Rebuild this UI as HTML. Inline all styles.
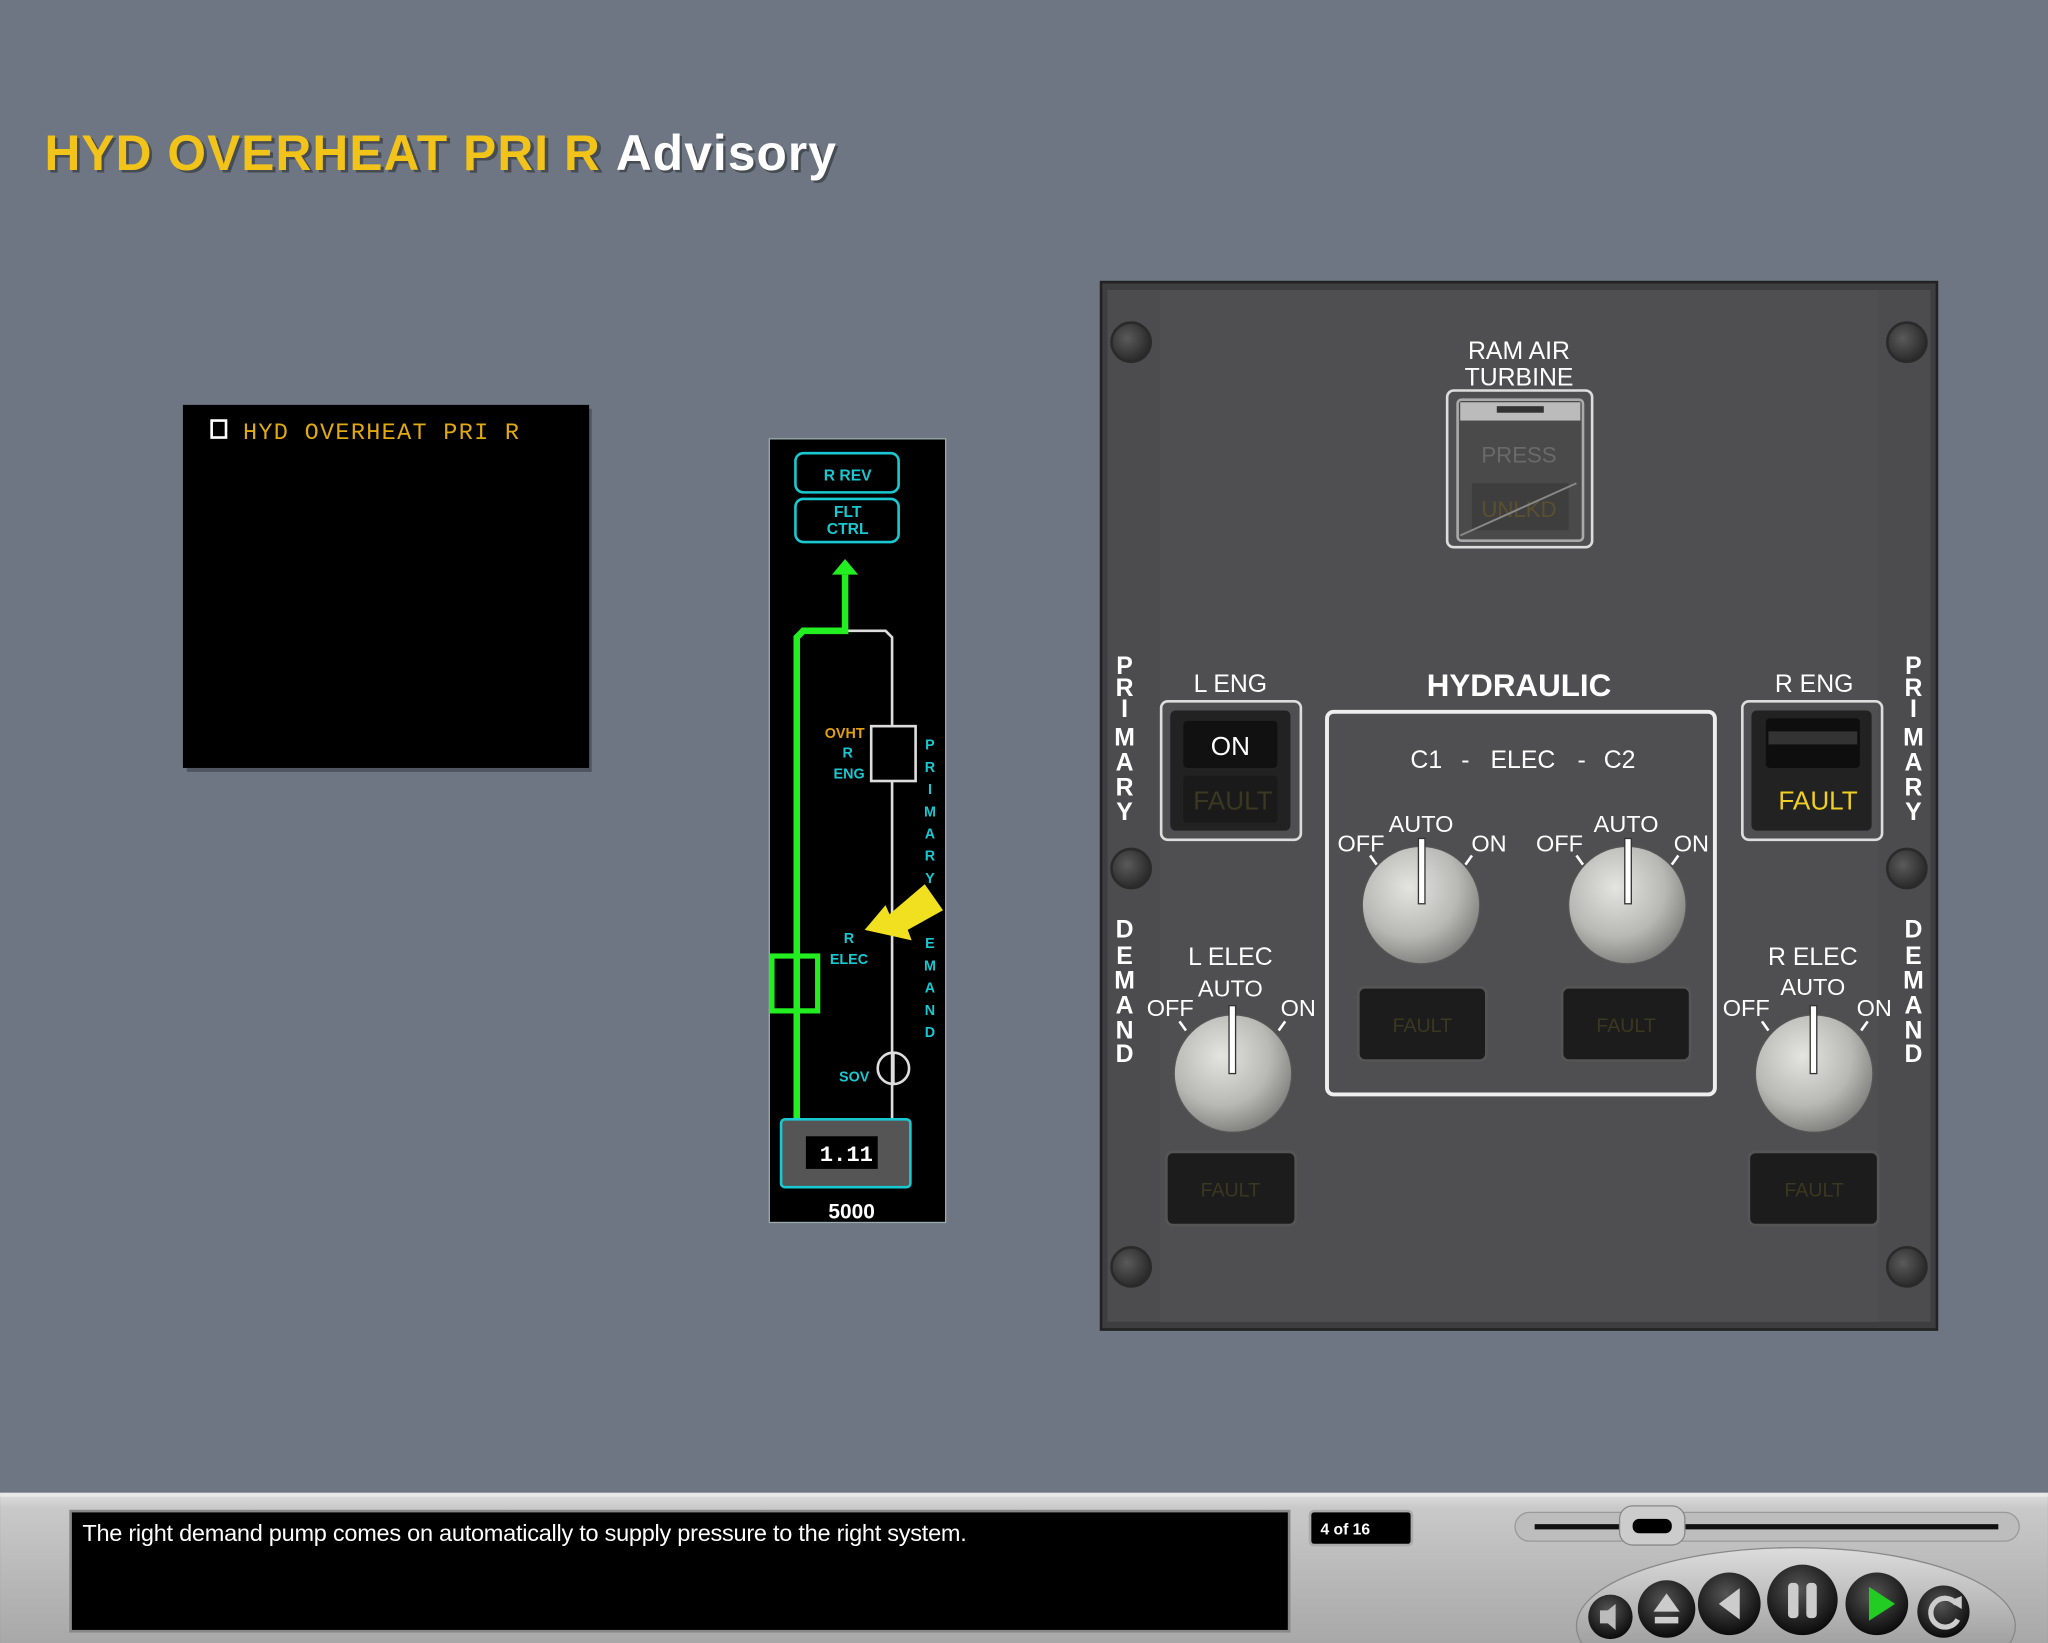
<!DOCTYPE html>
<html><head><meta charset="utf-8"><style>
html,body{margin:0;padding:0;background:#6e7684;}
svg{display:block}
text{font-family:"Liberation Sans",sans-serif}
</style></head><body>
<svg width="2048" height="1643" viewBox="0 0 1568 1258" xmlns="http://www.w3.org/2000/svg">
<defs>
<radialGradient id="knob" cx="0.4" cy="0.35" r="0.7"><stop offset="0" stop-color="#e4e4e0"/><stop offset="0.6" stop-color="#b8b8b4"/><stop offset="1" stop-color="#7a7a78"/></radialGradient>
<linearGradient id="bar" x1="0" y1="0" x2="0" y2="1"><stop offset="0" stop-color="#e0e0e0"/><stop offset="0.1" stop-color="#c9c9c9"/><stop offset="1" stop-color="#a8a8a8"/></linearGradient>
<radialGradient id="btn" cx="0.45" cy="0.35" r="0.7"><stop offset="0" stop-color="#555"/><stop offset="1" stop-color="#050505"/></radialGradient>
<linearGradient id="oval" x1="0" y1="0" x2="0" y2="1"><stop offset="0" stop-color="#dcdcdc"/><stop offset="1" stop-color="#7c7c7c"/></linearGradient>
<radialGradient id="screw" cx="0.4" cy="0.4" r="0.6"><stop offset="0" stop-color="#5a5a5a"/><stop offset="1" stop-color="#2a2a2a"/></radialGradient>
</defs>
<rect width="1568" height="1258" fill="#6e7684"/>
<!-- title -->
<text x="34" y="130" font-size="38" font-weight="bold" fill="#222" opacity="0.5" transform="translate(2,2)" textLength="606" lengthAdjust="spacing">HYD OVERHEAT PRI R Advisory</text>
<text x="34" y="130" font-size="38" font-weight="bold" fill="#f2c41a" textLength="606" lengthAdjust="spacing">HYD OVERHEAT PRI R <tspan fill="#ffffff">Advisory</tspan></text>

<!-- EICAS -->
<rect x="143" y="313" width="310" height="278" fill="#3a3f48" opacity="0.6"/>
<rect x="140" y="310" width="311" height="278" fill="#000"/>
<rect x="162" y="322" width="11" height="13" fill="none" stroke="#fff" stroke-width="2"/>
<text x="186" y="336" font-size="18" fill="#e0aa10" style="font-family:'Liberation Mono',monospace" letter-spacing="1">HYD OVERHEAT PRI R</text>

<!-- synoptic -->
<rect x="589" y="336" width="135" height="600" fill="#000" stroke="#9aa" stroke-width="1"/>
<rect x="609" y="347" width="79" height="30" rx="6" fill="none" stroke="#19c8d0" stroke-width="2"/>
<text x="649" y="368" font-size="12" font-weight="bold" fill="#19c8d0" text-anchor="middle">R  REV</text>
<rect x="609" y="382" width="79" height="33" rx="6" fill="none" stroke="#19c8d0" stroke-width="2"/>
<text x="649" y="396" font-size="12" font-weight="bold" fill="#19c8d0" text-anchor="middle">FLT</text>
<text x="649" y="409" font-size="12" font-weight="bold" fill="#19c8d0" text-anchor="middle">CTRL</text>
<polyline points="683,857 683,488 678,483 647,483" fill="none" stroke="#ddd" stroke-width="2"/>
<polyline points="610,862 610,488 615,483 647,483 647,440" fill="none" stroke="#22ee22" stroke-width="5"/>
<polygon points="637,440 647,428 657,440" fill="#22ee22"/>
<rect x="591" y="732" width="35" height="42" fill="none" stroke="#22ee22" stroke-width="4"/>
<rect x="667" y="556" width="34" height="42" fill="#000" stroke="#ddd" stroke-width="2"/>
<text x="662" y="565" font-size="11" font-weight="bold" fill="#e0a010" text-anchor="end">OVHT</text>
<text x="653" y="580" font-size="11" font-weight="bold" fill="#19c8d0" text-anchor="end">R</text>
<text x="662" y="596" font-size="11" font-weight="bold" fill="#19c8d0" text-anchor="end">ENG</text>
<g font-size="11" font-weight="bold" fill="#19c8d0" text-anchor="middle">
<text x="712" y="574">P</text><text x="712" y="591">R</text><text x="712" y="608">I</text><text x="712" y="625">M</text><text x="712" y="642">A</text><text x="712" y="659">R</text><text x="712" y="676">Y</text>
<text x="712" y="726">E</text><text x="712" y="743">M</text><text x="712" y="760">A</text><text x="712" y="777">N</text><text x="712" y="794">D</text>
<text x="650" y="722">R</text><text x="650" y="738">ELEC</text>
<text x="654" y="828">SOV</text>
</g>
<polygon points="662,712 678,693 681,700 708,677 722,697 695,712 698,720" fill="#f0e020"/>
<ellipse cx="684" cy="818" rx="12" ry="12" fill="none" stroke="#ddd" stroke-width="2"/>
<line x1="684" y1="806" x2="684" y2="830" stroke="#ddd" stroke-width="2"/>
<rect x="598" y="857" width="99" height="52" rx="3" fill="#555" stroke="#19c8d0" stroke-width="2"/>
<rect x="617" y="870" width="55" height="25" fill="#000"/>
<text x="648" y="889" font-size="17" font-weight="bold" fill="#fff" text-anchor="middle" style="font-family:'Liberation Mono',monospace">1.11</text>
<text x="652" y="933" font-size="16" font-weight="bold" fill="#fff" text-anchor="middle">5000</text>

<!-- hydraulic panel -->
<rect x="843" y="216" width="640" height="802" fill="#3e3e40" stroke="#222" stroke-width="2"/>
<rect x="848" y="222" width="630" height="790" fill="#4c4c4e"/>
<rect x="888" y="222" width="550" height="790" fill="#4f4f51"/>
<g fill="url(#screw)" stroke="#2a2a2a" stroke-width="2">
<circle cx="866" cy="262" r="15"/><circle cx="1460" cy="262" r="15"/>
<circle cx="866" cy="665" r="15"/><circle cx="1460" cy="665" r="15"/>
<circle cx="866" cy="970" r="15"/><circle cx="1460" cy="970" r="15"/>
</g>
<g fill="#fff" font-size="19" text-anchor="middle">
<text x="1163" y="275">RAM AIR</text><text x="1163" y="295">TURBINE</text>
<text x="942" y="530">L ENG</text><text x="1389" y="530">R ENG</text>
<text x="1163" y="533" font-size="24" font-weight="bold">HYDRAULIC</text>
<text x="1092" y="588">C1</text><text x="1122" y="588">-</text><text x="1166" y="588">ELEC</text><text x="1211" y="588">-</text><text x="1240" y="588">C2</text>
<text x="942" y="739">L ELEC</text><text x="1388" y="739">R ELEC</text>
</g>
<!-- RAT -->
<rect x="1108" y="299" width="111" height="120" rx="5" fill="none" stroke="#ddd" stroke-width="2"/>
<rect x="1116" y="306" width="96" height="108" rx="3" fill="#4a4a4a" stroke="#aaa" stroke-width="2"/>
<rect x="1118" y="308" width="92" height="14" fill="#bbb"/>
<rect x="1146" y="311" width="36" height="5" fill="#333"/>
<text x="1163" y="354" font-size="17" fill="#6a6a6a" text-anchor="middle">PRESS</text>
<rect x="1127" y="370" width="74" height="36" fill="#3e3e3e"/>
<text x="1163" y="396" font-size="17" fill="#5a5030" text-anchor="middle">UNLKD</text>
<line x1="1118" y1="410" x2="1207" y2="370" stroke="#888" stroke-width="1.5"/>
<!-- L ENG -->
<rect x="889" y="537" width="107" height="106" rx="5" fill="none" stroke="#ddd" stroke-width="2"/>
<rect x="896" y="544" width="92" height="92" rx="4" fill="#222"/>
<rect x="906" y="552" width="72" height="36" rx="3" fill="#111"/>
<text x="942" y="578" font-size="20" fill="#fff" text-anchor="middle">ON</text>
<rect x="906" y="594" width="72" height="36" rx="3" fill="#1a1a1a"/>
<text x="944" y="620" font-size="20" fill="#3a3820" text-anchor="middle">FAULT</text>
<!-- R ENG -->
<rect x="1334" y="537" width="107" height="106" rx="5" fill="none" stroke="#ddd" stroke-width="2"/>
<rect x="1341" y="544" width="92" height="92" rx="4" fill="#222"/>
<rect x="1352" y="550" width="72" height="38" rx="3" fill="#0e0e0e"/>
<rect x="1354" y="560" width="68" height="10" fill="#333"/>
<text x="1392" y="620" font-size="20" fill="#f0d020" text-anchor="middle">FAULT</text>
<!-- center box -->
<rect x="1016" y="545" width="297" height="293" rx="5" fill="none" stroke="#eee" stroke-width="3"/>
<!-- knobs -->
<g font-size="18" fill="#fff" text-anchor="middle">
<text x="1088" y="637">AUTO</text><text x="1042" y="652">OFF</text><text x="1140" y="652">ON</text>
<text x="1245" y="637">AUTO</text><text x="1194" y="652">OFF</text><text x="1295" y="652">ON</text>
<text x="942" y="763">AUTO</text><text x="896" y="778">OFF</text><text x="994" y="778">ON</text>
<text x="1388" y="762">AUTO</text><text x="1337" y="778">OFF</text><text x="1435" y="778">ON</text>
</g>
<g>
<circle cx="1088" cy="693" r="45" fill="url(#knob)" stroke="#555" stroke-width="1"/>
<rect x="1086" y="642" width="5" height="50" fill="#fff" stroke="#333" stroke-width="1"/>
</g>
<g>
<circle cx="1246" cy="693" r="45" fill="url(#knob)" stroke="#555" stroke-width="1"/>
<rect x="1244" y="642" width="5" height="50" fill="#fff" stroke="#333" stroke-width="1"/>
</g>
<g>
<circle cx="944" cy="822" r="45" fill="url(#knob)" stroke="#555" stroke-width="1"/>
<rect x="941" y="770" width="5" height="52" fill="#fff" stroke="#333" stroke-width="1"/>
</g>
<g>
<circle cx="1389" cy="822" r="45" fill="url(#knob)" stroke="#555" stroke-width="1"/>
<rect x="1386" y="770" width="5" height="52" fill="#fff" stroke="#333" stroke-width="1"/>
</g>
<g stroke="#fff" stroke-width="2">
<line x1="1049" y1="655" x2="1054" y2="662"/><line x1="1127" y1="655" x2="1122" y2="662"/>
<line x1="1207" y1="655" x2="1212" y2="662"/><line x1="1285" y1="655" x2="1280" y2="662"/>
<line x1="903" y1="782" x2="908" y2="789"/><line x1="984" y1="782" x2="979" y2="789"/>
<line x1="1349" y1="782" x2="1354" y2="789"/><line x1="1430" y1="782" x2="1425" y2="789"/>
</g>
<!-- fault buttons -->
<g fill="#1c1c1c" stroke="#555" stroke-width="2">
<rect x="1040" y="756" width="98" height="56" rx="5"/>
<rect x="1196" y="756" width="98" height="56" rx="5"/>
<rect x="893" y="882" width="99" height="56" rx="5"/>
<rect x="1339" y="882" width="99" height="56" rx="5"/>
</g>
<g font-size="15" fill="#3a3820" text-anchor="middle">
<text x="1089" y="790">FAULT</text><text x="1245" y="790">FAULT</text>
<text x="942" y="916">FAULT</text><text x="1389" y="916">FAULT</text>
</g>
<!-- side vertical labels -->
<g font-size="19" font-weight="bold" fill="#fff" text-anchor="middle">
<text x="861" y="516">P</text><text x="861" y="533">R</text><text x="861" y="549">I</text><text x="861" y="571">M</text><text x="861" y="590">A</text><text x="861" y="609">R</text><text x="861" y="628">Y</text>
<text x="1465" y="516">P</text><text x="1465" y="533">R</text><text x="1465" y="549">I</text><text x="1465" y="571">M</text><text x="1465" y="590">A</text><text x="1465" y="609">R</text><text x="1465" y="628">Y</text>
<text x="861" y="718">D</text><text x="861" y="738">E</text><text x="861" y="757">M</text><text x="861" y="776">A</text><text x="861" y="795">N</text><text x="861" y="813">D</text>
<text x="1465" y="718">D</text><text x="1465" y="738">E</text><text x="1465" y="757">M</text><text x="1465" y="776">A</text><text x="1465" y="795">N</text><text x="1465" y="813">D</text>
</g>

<!-- bottom bar -->
<rect x="0" y="1143" width="1568" height="115" fill="url(#bar)"/>
<rect x="0" y="1143" width="1568" height="3" fill="#e8e8e8"/>
<rect x="54" y="1157" width="933" height="92" fill="#000" stroke="#888" stroke-width="2"/>
<text x="63" y="1180" font-size="18" fill="#fff" letter-spacing="-0.2" textLength="677" lengthAdjust="spacingAndGlyphs">The right demand pump comes on automatically to supply pressure to the right system.</text>
<rect x="1003" y="1157" width="78" height="26" rx="3" fill="#000" stroke="#aaa" stroke-width="2"/>
<text x="1011" y="1175" font-size="12" font-weight="bold" fill="#fff">4 of 16</text>
<rect x="1160" y="1158" width="386" height="22" rx="11" fill="#bdbdbd" stroke="#999"/>
<rect x="1175" y="1167" width="355" height="4" fill="#111"/>
<rect x="1240" y="1153" width="50" height="30" rx="10" fill="#ccc" stroke="#888"/>
<rect x="1250" y="1163" width="30" height="11" rx="5" fill="#000"/>
<ellipse cx="1375" cy="1245" rx="168" ry="60" fill="url(#oval)" stroke="#888"/>
<circle cx="1233" cy="1238" r="17" fill="url(#btn)"/>
<polygon points="1225,1233 1231,1233 1237,1228 1237,1248 1231,1243 1225,1243" fill="#bbb"/>
<circle cx="1276" cy="1232" r="22" fill="url(#btn)"/>
<polygon points="1266,1234 1276,1220 1286,1234" fill="#ccc"/><rect x="1267" y="1238" width="18" height="5" fill="#ccc"/>
<circle cx="1324" cy="1228" r="24" fill="url(#btn)"/>
<polygon points="1316,1228 1332,1216 1332,1240" fill="#ccc"/>
<circle cx="1380" cy="1225" r="27" fill="url(#btn)"/>
<rect x="1369" y="1212" width="8" height="27" rx="3" fill="#ccc"/><rect x="1383" y="1212" width="8" height="27" rx="3" fill="#ccc"/>
<circle cx="1437" cy="1228" r="24" fill="url(#btn)"/>
<polygon points="1431,1215 1451,1228 1431,1241" fill="#22cc22"/>
<circle cx="1488" cy="1234" r="20" fill="url(#btn)"/>
<path d="M1498,1228 A11,11 0 1 0 1499,1240" fill="none" stroke="#ccc" stroke-width="4"/>
<polygon points="1492,1226 1502,1222 1502,1232" fill="#ccc"/>
</svg>
</body></html>
